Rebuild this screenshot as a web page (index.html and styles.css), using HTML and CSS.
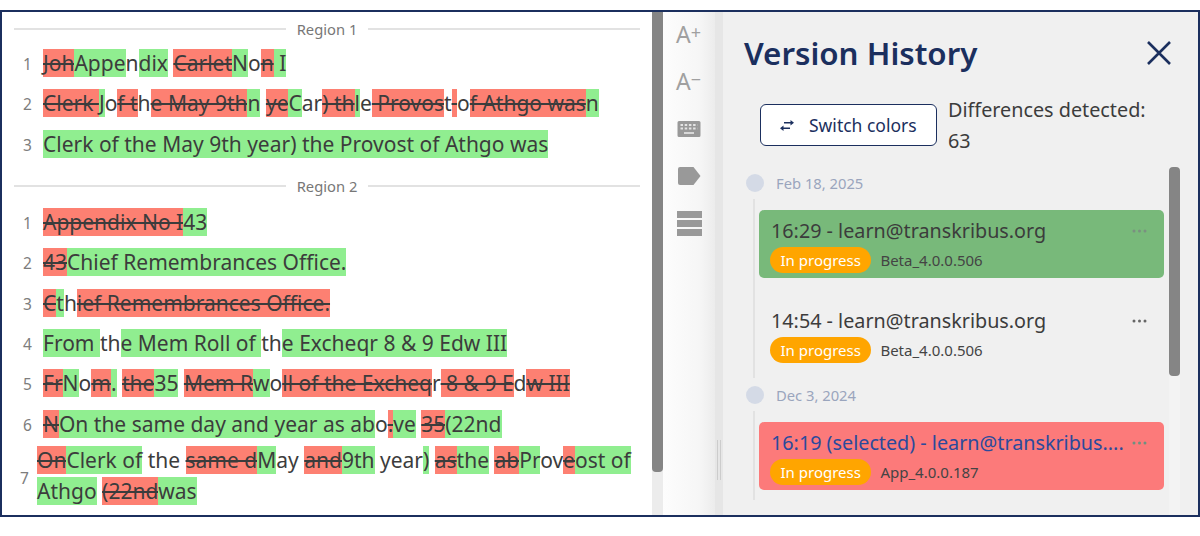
FILE: index.html
```html
<!DOCTYPE html>
<html>
<head>
    <meta charset="UTF-8">
    <title>Version History</title>
    <link rel="stylesheet" href="styles.css">
</head>
<body>
    <div class="frame">
        <main class="compare">
            <div class="region-title"><span>Region 1</span></div>
            <div class="line"><span class="line-no">1</span><div class="line-text"><del>Joh</del><ins>Appe</ins>n<ins>dix</ins> <del>Carlet</del><ins>N</ins>o<del>n</del><ins> I</ins></div></div>
            <div class="line"><span class="line-no">2</span><div class="line-text"><del>Clerk </del><ins>J</ins>o<del>f t</del>h<del>e May 9th</del><ins>n</ins> <del>ye</del><ins>C</ins>ar<del>) th</del><ins>l</ins>e<del> Provos</del>t<del> </del>o<del>f Athgo was</del><ins>n</ins></div></div>
            <div class="line"><span class="line-no">3</span><div class="line-text"><ins>Clerk of the May 9th year) the Provost of Athgo was</ins></div></div>

            <div class="region-title second"><span>Region 2</span></div>
            <div class="line"><span class="line-no">1</span><div class="line-text"><del>Appendix No I</del><ins>43</ins></div></div>
            <div class="line"><span class="line-no">2</span><div class="line-text"><del>43</del><ins>Chief Remembrances Office.</ins></div></div>
            <div class="line"><span class="line-no">3</span><div class="line-text"><del>C</del><ins>t</ins>h<del>ief Remembrances Office.</del></div></div>
            <div class="line"><span class="line-no">4</span><div class="line-text"><ins>From </ins>th<ins>e Mem Roll of </ins>th<ins>e Excheqr 8 &amp; 9 Edw III</ins></div></div>
            <div class="line"><span class="line-no">5</span><div class="line-text"><del>Fr</del><ins>N</ins>o<del>m</del><ins>.</ins> <del>the</del><ins>35</ins> <del>Mem R</del><ins>w</ins>o<del>ll of the Excheq</del>r<del> 8 &amp; 9 E</del>d<del>w III</del></div></div>
            <div class="line"><span class="line-no">6</span><div class="line-text"><del>N</del><ins>On the same day and year as ab</ins>o<del>.</del><ins>ve</ins> <del>35</del><ins>(22nd</ins></div></div>
            <div class="line line-wrap"><span class="line-no">7</span><div class="line-text"><del>On</del><ins>Clerk of</ins> the <del>same d</del><ins>M</ins>ay <del>and</del><ins>9th</ins> year<ins>)</ins> <del>as</del><ins>the</ins> <del>ab</del><ins>Pr</ins>ov<del>e</del><ins>ost of</ins> <ins>Athgo</ins> <del>(22nd</del><ins>was</ins></div></div>
        </main>

        <div class="scroll-track"><div class="scroll-thumb"></div></div>

        <aside class="tools">
            <div class="tool-text">A<small>+</small></div>
            <div class="tool-text">A<small>&minus;</small></div>
            <svg class="tool-icon" viewBox="0 0 24 24"><path fill="#999" d="M2 4h20a1.500 1.500 0 0 1 1.500 1.500v13a1.500 1.500 0 0 1-1.500 1.500H2a1.500 1.500 0 0 1-1.500-1.500v-13A1.500 1.500 0 0 1 2 4z"/><path fill="none" stroke="#e4e4e4" stroke-width="2" stroke-dasharray="2.500 1.700" d="M3.500 8h17M3.500 11.500h17"/><path fill="none" stroke="#eee" stroke-width="1.500" d="M7 16h10"/></svg>
            <svg class="tool-icon" viewBox="0 0 24 24"><path fill="#999" d="M3 2h13.500L23.500 11l-7 9H3A2 2 0 0 1 1 18V4a2 2 0 0 1 2-2z"/></svg>
            <div class="tool-bars"><i></i><i></i><i></i></div>
        </aside>

        <div class="splitter"><div class="grip"></div></div>

        <section class="history">
            <header class="history-head">
                <h1>Version History</h1>
                <svg class="close" viewBox="0 0 24 24"><path fill="none" stroke="#1b2f5e" stroke-width="2.600" d="M1 1l22 22M23 1L1 23"/></svg>
            </header>
            <div class="history-bar">
                <button class="switch-btn">
                    <svg viewBox="0 0 14 11"><path fill="none" stroke="#1b2f5e" stroke-width="1.400" d="M4 2.800h7M3 8.200h7"/><path fill="#1b2f5e" d="M14 2.800L10.500 0v5.600zM0 8.200l3.500-2.800v5.600z"/></svg>
                    Switch colors
                </button>
                <div class="diff-count">Differences detected: 63</div>
            </div>
            <div class="history-body">
                <div class="timeline">
                    <div class="date"><i class="dot"></i>Feb 18, 2025</div>
                    <div class="entries">
                        <div class="entry entry-green">
                            <div class="entry-title"><span>16:29 - learn@transkribus.org</span><svg class="more" viewBox="0 0 15 4"><circle cx="2" cy="2" r="1.500"/><circle cx="7.500" cy="2" r="1.500"/><circle cx="13" cy="2" r="1.500"/></svg></div>
                            <div class="entry-meta"><span class="pill">In progress</span>Beta_4.0.0.506</div>
                        </div>
                        <div class="entry">
                            <div class="entry-title"><span>14:54 - learn@transkribus.org</span><svg class="more" viewBox="0 0 15 4"><circle cx="2" cy="2" r="1.500"/><circle cx="7.500" cy="2" r="1.500"/><circle cx="13" cy="2" r="1.500"/></svg></div>
                            <div class="entry-meta"><span class="pill">In progress</span>Beta_4.0.0.506</div>
                        </div>
                    </div>
                    <div class="date"><i class="dot"></i>Dec 3, 2024</div>
                    <div class="entries">
                        <div class="entry entry-red">
                            <div class="entry-title"><span>16:19 (selected) - learn@transkribus....</span><svg class="more" viewBox="0 0 15 4"><circle cx="2" cy="2" r="1.500"/><circle cx="7.500" cy="2" r="1.500"/><circle cx="13" cy="2" r="1.500"/></svg></div>
                            <div class="entry-meta"><span class="pill">In progress</span>App_4.0.0.187</div>
                        </div>
                    </div>
                </div>
                <div class="history-scroll"><div class="history-thumb"></div></div>
            </div>
        </section>
    </div>
</body>
</html>
```

FILE: styles.css
```css
* {
    box-sizing: border-box;
    margin: 0;
    padding: 0;
}

body {
    font-family: "Noto Sans", sans-serif;
    background: #fff;
    color: #3c3c3c;
}

.frame {
    display: flex;
    height: 507px;
    margin-top: 10px;
    border: 2px solid #1b2f5e;
    overflow: hidden;
}

/* text comparison */
.compare {
    width: 650px;
    padding: 4px 12px 0 12px;
    background: #fff;
    overflow: hidden;
    flex-shrink: 0;
}

.region-title {
    display: flex;
    align-items: center;
    gap: 11px;
    height: 26px;
    margin-bottom: 1.500px;
    font-size: 14.750px;
    color: #777;
}

.region-title::before,
.region-title::after {
    content: "";
    flex: 1;
    height: 1.500px;
    background: #e2e2e2;
}

.region-title.second {
    margin-top: 8.500px;
    margin-bottom: 3.500px;
}

.line {
    display: flex;
    align-items: center;
    min-height: 40.330px;
    padding-left: 9px;
    font-size: 21px;
    line-height: 31px;
}

.line-no {
    width: 20px;
    margin-top: 2px;
    flex-shrink: 0;
    font-size: 15.500px;
    color: #7d7d7d;
}

.line-text {
    white-space: pre-wrap;
}

.line-wrap {
    padding-left: 6px;
    margin-top: 1px;
}

.line-wrap .line-no {
    width: 17px;
    margin-top: 4px;
}

del {
    background: #fd8072;
    text-decoration: line-through;
}

ins {
    background: #90ee90;
    text-decoration: none;
}

.scroll-track {
    width: 11px;
    flex-shrink: 0;
    background: #ececec;
}

.scroll-thumb {
    height: 460px;
    background: #858585;
    border-radius: 0 0 4px 4px;
}

/* icon strip */
.tools {
    display: flex;
    flex-direction: column;
    align-items: center;
    width: 52px;
    padding: 7px 0 0 0;
    flex-shrink: 0;
    background: linear-gradient(to right, #fdfdfd, #f6f6f6 70%, #ececec);
}

.tool-text {
    display: flex;
    align-items: flex-start;
    width: 26px;
    height: 47px;
    font-size: 23px;
    line-height: 30px;
    color: #a0a0a0;
}

.tool-text small {
    font-size: 18px;
    line-height: 26px;
}

.tool-icon {
    display: block;
    width: 24px;
    height: 24px;
    margin-top: 4px;
    margin-bottom: 20px;
}

.tool-bars {
    display: flex;
    flex-direction: column;
    gap: 2px;
    width: 25px;
    margin-top: 2px;
}

.tool-bars i {
    height: 7px;
    background: #999;
}

.splitter {
    display: flex;
    align-items: flex-end;
    justify-content: center;
    width: 8px;
    flex-shrink: 0;
    background: #e6e6e6;
    padding-bottom: 35px;
}

.grip {
    width: 4px;
    height: 40px;
    border-left: 1px solid #ccc;
    border-right: 1px solid #ccc;
}

/* version history */
.history {
    flex: 1;
    display: flex;
    flex-direction: column;
    min-width: 0;
    background: #f0f0f0;
}

.history-head {
    display: flex;
    align-items: center;
    justify-content: space-between;
    padding: 17px 27px 0 21px;
}

.history-head h1 {
    font-size: 31.300px;
    line-height: 48px;
    font-weight: 600;
    color: #1b2f5e;
}

.close {
    width: 24px;
    height: 24px;
}

.history-bar {
    display: flex;
    align-items: flex-start;
    gap: 11px;
    margin-top: 17px;
    padding-left: 37px;
}

.switch-btn {
    display: flex;
    align-items: center;
    gap: 15px;
    width: 177px;
    height: 42px;
    margin-top: 10px;
    padding-left: 19px;
    border: 1px solid #1b2f5e;
    border-radius: 6px;
    background: #fff;
    font-family: inherit;
    font-size: 17.500px;
    color: #1b2f5e;
}

.switch-btn svg {
    width: 14px;
    height: 11px;
}

.diff-count {
    width: 215px;
    font-size: 19.800px;
    line-height: 31px;
}

.history-body {
    flex: 1;
    display: flex;
    min-height: 0;
    overflow: hidden;
    margin-top: 11px;
}

.timeline {
    width: 446px;
    padding: 2px 0 0 23px;
    flex-shrink: 0;
}

.date {
    display: flex;
    align-items: center;
    height: 28px;
    font-size: 14.750px;
    color: #9aa5bd;
}

.dot {
    width: 18px;
    height: 18px;
    margin-right: 12px;
    border-radius: 50%;
    background: #d4dae6;
}

.entries {
    margin: 2px 0 3px 7px;
    padding: 11px 0 10px 4px;
    border-left: 2px solid #e2e2e2;
}

.entry {
    width: 405px;
    height: 68px;
    padding: 5px 17px 0 12px;
    margin-bottom: 22px;
    border-radius: 5px;
}

.entries .entry:last-child {
    margin-bottom: 0;
}

.entry-green {
    background: #78b97a;
}

.entry-red {
    background: #fc7a7a;
}

.entry-title {
    display: flex;
    align-items: center;
    justify-content: space-between;
    font-size: 19.750px;
    line-height: 31px;
    white-space: nowrap;
}

.entry-red .entry-title span {
    color: #2b4a9c;
}

.more {
    width: 15px;
    height: 4px;
    fill: #666;
}

.entry-green .more {
    fill: #7a9080;
}

.entry-red .more {
    fill: #6f9080;
}

.entry-meta {
    display: flex;
    align-items: center;
    gap: 9px;
    margin-top: 1px;
    font-size: 15px;
    color: #444;
}

.pill {
    display: inline-block;
    padding: 0 10.500px;
    margin-left: -1px;
    border-radius: 14px;
    background: #ffa500;
    color: #fff;
    line-height: 26px;
    font-size: 15px;
}

.history-scroll {
    width: 11px;
    background: #f3f3f3;
}

.history-thumb {
    height: 209px;
    border-radius: 4px;
    background: #858585;
}
```
